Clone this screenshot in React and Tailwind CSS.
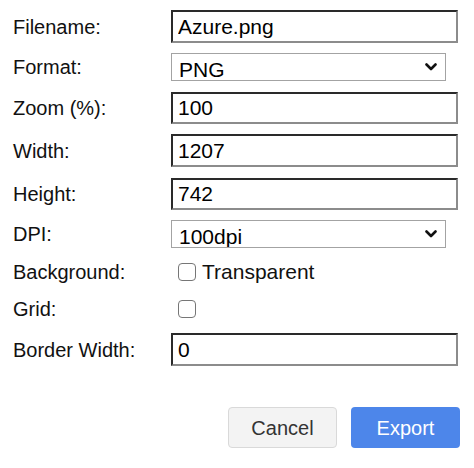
import React, { useState } from "react";

const font = { fontFamily: '"Liberation Sans", Arial, sans-serif' };

const inputCls =
  "w-[287px] h-full border-2 border-t-[#2a2a2a] border-l-[#2a2a2a] border-r-[#8c8c8c] border-b-[#8c8c8c] bg-white px-[5px] text-[21px] text-black outline-none";

const Chevron = () => (
  <svg
    className="pointer-events-none absolute right-[9px] top-1/2 -translate-y-1/2"
    width="12"
    height="8"
    viewBox="0 0 12 8"
    fill="none"
  >
    <path d="M1.5 1.5 6 6l4.5-4.5" stroke="#111" strokeWidth="2.6" strokeLinecap="round" strokeLinejoin="round" />
  </svg>
);

const Row = ({ label, className, children }) => (
  <div className={`flex items-center ${className}`}>
    <div className="w-[158px] text-[20px] text-[#111]">{label}</div>
    {children}
  </div>
);

const Checkbox = ({ checked, onChange }) => (
  <button
    type="button"
    onClick={onChange}
    className="w-[18px] h-[18px] rounded-[4px] border border-[#767676] bg-white ml-[7px]"
  >
    {checked ? "✓" : null}
  </button>
);

const App = () => {
  const [filename, setFilename] = useState("Azure.png");
  const [format, setFormat] = useState("PNG");
  const [zoom, setZoom] = useState("100");
  const [width, setWidth] = useState("1207");
  const [height, setHeight] = useState("742");
  const [dpi, setDpi] = useState("100dpi");
  const [transparent, setTransparent] = useState(false);
  const [grid, setGrid] = useState(false);
  const [border, setBorder] = useState("0");

  return (
    <div className="w-[474px] h-[468px] bg-white pl-[13px] pt-[10px]" style={font}>
      <Row label="Filename:" className="h-[33px]">
        <input className={inputCls} value={filename} onChange={(e) => setFilename(e.target.value)} />
      </Row>

      {/* Format */}
      <Row label="Format:" className="h-[28px] mt-[10px]">
        <div className="relative h-full w-[275px]">
          <select
            value={format}
            onChange={(e) => setFormat(e.target.value)}
            className="appearance-none w-full h-full border border-[#a3a3a3] bg-white pl-[7px] text-[21px] text-black outline-none"
          >
            <option>PNG</option>
            <option>JPEG</option>
            <option>SVG</option>
            <option>PDF</option>
          </select>
          <Chevron />
        </div>
      </Row>

      <Row label="Zoom (%):" className="h-[32px] mt-[11px]">
        <input className={inputCls} value={zoom} onChange={(e) => setZoom(e.target.value)} />
      </Row>

      <Row label="Width:" className="h-[33px] mt-[10px]">
        <input className={inputCls} value={width} onChange={(e) => setWidth(e.target.value)} />
      </Row>

      <Row label="Height:" className="h-[32px] mt-[11px]">
        <input className={inputCls} value={height} onChange={(e) => setHeight(e.target.value)} />
      </Row>

      {/* DPI */}
      <Row label="DPI:" className="h-[28px] mt-[10px]">
        <div className="relative h-full w-[275px]">
          <select
            value={dpi}
            onChange={(e) => setDpi(e.target.value)}
            className="appearance-none w-full h-full border border-[#a3a3a3] bg-white pl-[7px] text-[21px] text-black outline-none"
          >
            <option>72dpi</option>
            <option>100dpi</option>
            <option>200dpi</option>
            <option>300dpi</option>
          </select>
          <Chevron />
        </div>
      </Row>

      <Row label="Background:" className="h-[34px] mt-[7px]">
        <Checkbox checked={transparent} onChange={() => setTransparent(!transparent)} />
        <span className="ml-[6px] text-[21px] text-[#111]">Transparent</span>
      </Row>

      <Row label="Grid:" className="h-[34px] mt-[3px]">
        <Checkbox checked={grid} onChange={() => setGrid(!grid)} />
      </Row>

      <Row label="Border Width:" className="h-[33px] mt-[7px]">
        <input className={inputCls} value={border} onChange={(e) => setBorder(e.target.value)} />
      </Row>

      {/* Buttons */}
      <div className="flex justify-end gap-[14px] pr-[14px] mt-[41px]">
        <button className="w-[109px] h-[41px] rounded-[4px] border border-[#d9d9d9] bg-[#f3f3f3] text-[20px] text-[#333]">
          Cancel
        </button>
        <button className="w-[109px] h-[41px] rounded-[4px] bg-[#4d86ea] text-[20px] text-white">
          Export
        </button>
      </div>
    </div>
  );
};

export default App;
